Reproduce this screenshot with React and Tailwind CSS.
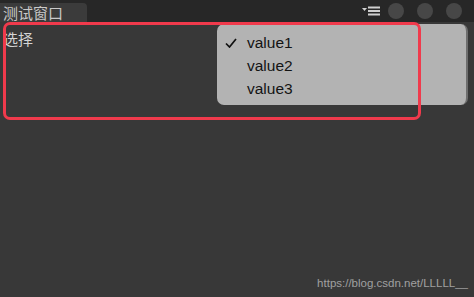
import React from "react";

const CJK = { fontFamily: '"Noto Sans CJK SC", "Liberation Sans", sans-serif' };
const SANS = { fontFamily: '"Liberation Sans", Arial, sans-serif' };

export default function App() {
    const values = ["value1", "value2", "value3"];
    const selected = "value1";

    return (
        <div className="relative w-[474px] h-[297px] bg-[#383838] overflow-hidden" style={SANS}>
            {/* Title bar */}
            <div className="flex items-end h-[22px] bg-[#272727]">
                <div className="w-[87px] h-[19px] bg-[#3b3b3b] rounded-tr-[4px] pl-[3px] flex items-center">
                    <span className="text-[15px] leading-none text-[#c9c9c9]" style={CJK}>测试窗口</span>
                </div>
                <div className="flex-1 h-full flex items-center justify-end pr-[12px]">
                    <svg width="18" height="10" viewBox="0 0 18 10" className="mr-[8px]">
                        <polygon points="0,2 5,2 2.5,5" fill="#d0d0d0" />
                        <rect x="6" y="0.5" width="12" height="2" fill="#d0d0d0" />
                        <rect x="6" y="4" width="12" height="2" fill="#d0d0d0" />
                        <rect x="6" y="7.5" width="12" height="2" fill="#d0d0d0" />
                    </svg>
                    <div className="flex gap-[13px]">
                        <div className="w-[16px] h-[16px] rounded-full bg-[#474747]" />
                        <div className="w-[16px] h-[16px] rounded-full bg-[#474747]" />
                        <div className="w-[16px] h-[16px] rounded-full bg-[#474747]" />
                    </div>
                </div>
            </div>

            {/* Content */}
            <div className="pl-[3px] pt-[6px]">
                <span className="text-[15px] leading-none text-[#d4d4d4]" style={CJK}>选择</span>
            </div>

            {/* Dropdown menu */}
            <div className="absolute left-[217px] top-[24px] w-[251px] h-[81px] bg-[#b3b3b3] rounded-[7px] pt-[7px] border-r-[2px] border-[#6e6e6e]">
                {values.map((v) => (
                    <div key={v} className="flex items-center h-[23px]">
                        <span className="w-[30px] pl-[8px] flex items-center">
                            {v === selected && (
                                <svg width="12" height="10" viewBox="0 0 12 10">
                                    <path d="M1 5.5 L4.5 9 L11 1" fill="none" stroke="#111" strokeWidth="1.7" />
                                </svg>
                            )}
                        </span>
                        <span className="text-[15.5px] text-[#141414]">{v}</span>
                    </div>
                ))}
            </div>

            {/* Highlight annotation */}
            <div className="absolute left-[3px] top-[22px] w-[418px] h-[98px] border-[3px] border-[#f03a4c] rounded-[7px]" />

            {/* Watermark */}
            <div className="absolute right-[6px] bottom-[5px] text-[11.5px] text-[#a0a0a0]">
                https://blog.csdn.net/LLLLL__
            </div>
        </div>
    );
}
